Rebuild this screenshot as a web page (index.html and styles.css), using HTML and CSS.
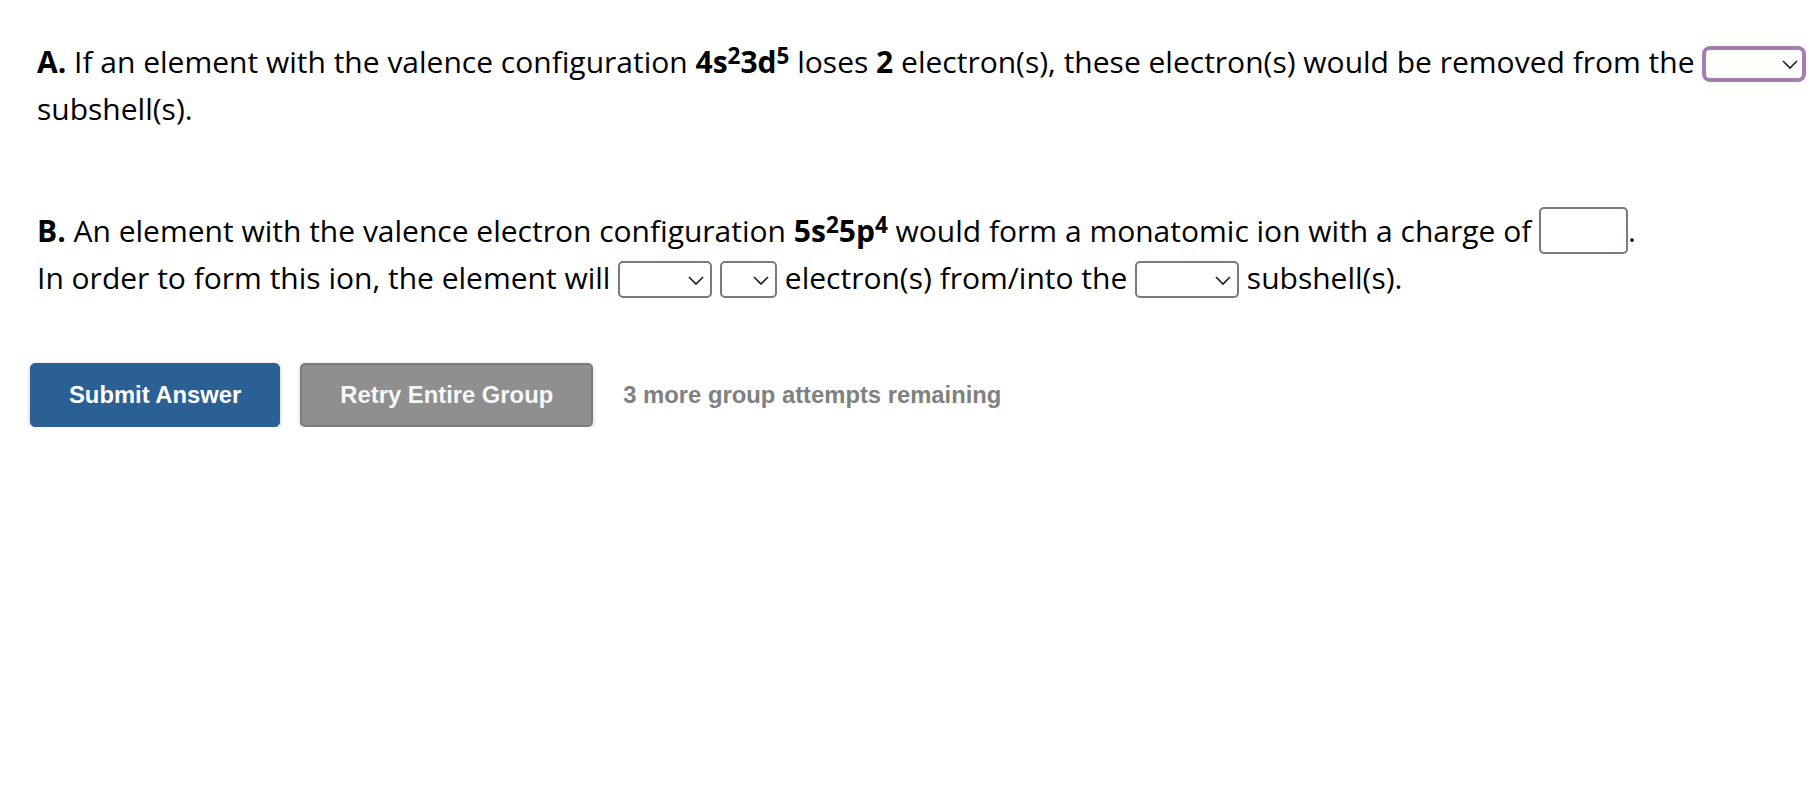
FILE: index.html
```html
<!DOCTYPE html>
<html lang="en">
<head>
<meta charset="utf-8">
<title>Question</title>
<link rel="stylesheet" href="styles.css">
</head>
<body>
<div class="page">
  <div class="question">
    <p class="part part-a"><strong>A.</strong> If an element with the valence configuration <strong>4s<sup>2</sup>3d<sup>5</sup></strong> loses <strong>2</strong> electron(s), these electron(s) would be removed from the <span class="select select-focus w-a"><svg class="chev" viewBox="0 0 16 9" width="16" height="9"><polyline points="1,1 8,8 15,1"/></svg></span> subshell(s).</p>
    <p class="part part-b"><strong>B.</strong> An element with the valence electron configuration <strong>5s<sup>2</sup>5p<sup>4</sup></strong> would form a monatomic ion with a charge of <span class="textbox"></span>.<br>In order to form this ion, the element will <span class="select w-b1"><svg class="chev" viewBox="0 0 16 9" width="16" height="9"><polyline points="1,1 8,8 15,1"/></svg></span> <span class="select w-b2"><svg class="chev" viewBox="0 0 16 9" width="16" height="9"><polyline points="1,1 8,8 15,1"/></svg></span> electron(s) from/into the <span class="select w-b3"><svg class="chev" viewBox="0 0 16 9" width="16" height="9"><polyline points="1,1 8,8 15,1"/></svg></span> subshell(s).</p>
  </div>
  <div class="actions">
    <button class="btn btn-submit" type="button">Submit Answer</button>
    <button class="btn btn-retry" type="button">Retry Entire Group</button>
    <span class="attempts">3 more group attempts remaining</span>
  </div>
</div>
</body>
</html>
```
FILE: styles.css
```css
html, body {
  margin: 0;
  padding: 0;
  background: #ffffff;
}

.page {
  padding: 38px 0 0 30px;
}

.question {
  padding-left: 7px;
  font-family: "Open Sans", "Noto Sans", sans-serif;
  font-size: 30px;
  line-height: 47px;
  color: #000;
}

.part {
  margin: 0;
}

.part-b {
  margin-top: 75px;
}

strong {
  font-weight: 700;
}

sup {
  font-size: 0.75em;
  line-height: 0;
  vertical-align: 0.42em;
}

.select {
  display: inline-block;
  box-sizing: border-box;
  height: 37px;
  border: 2px solid #7a7a7a;
  border-radius: 5px;
  vertical-align: -9px;
  background: #fff;
}

.select .chev {
  margin: 13px 6px 0 auto;
}

.select-focus {
  height: 36px;
  border: 4px solid #a77cb1;
  border-radius: 8px;
}

.select-focus .chev {
  margin: 10px 4px 0 auto;
}

.w-a { width: 104px; }
.w-b1 { width: 94px; }
.w-b2 { width: 57px; }
.w-b3 { width: 104px; }

.chev {
  display: block;
  fill: none;
  stroke: #222;
  stroke-width: 1.7;
}

.textbox {
  display: inline-block;
  box-sizing: border-box;
  width: 89px;
  height: 47px;
  border: 2px solid #7a7a7a;
  border-radius: 5px;
  vertical-align: -12px;
}

.actions {
  display: flex;
  align-items: center;
  margin-top: 62px;
}

.btn {
  box-sizing: border-box;
  height: 64px;
  padding: 0 38px;
  font-family: "Liberation Sans", Arial, sans-serif;
  font-weight: 700;
  font-size: 23.8px;
  border-radius: 5px;
  color: #fff;
  cursor: pointer;
}

.btn-submit {
  background: #2b6094;
  border: 1px solid #2b6094;
  box-shadow: 0 1px 4px rgba(0, 0, 0, 0.25);
}

.btn-retry {
  margin-left: 20px;
  background: #8f8f8f;
  border: 2px solid #7d7d7d;
  color: #f7f7f7;
  box-shadow: 0 1px 4px rgba(0, 0, 0, 0.2);
}

.attempts {
  margin-left: 30px;
  font-family: "Liberation Sans", Arial, sans-serif;
  font-weight: 700;
  font-size: 23.8px;
  color: #808080;
}
```
